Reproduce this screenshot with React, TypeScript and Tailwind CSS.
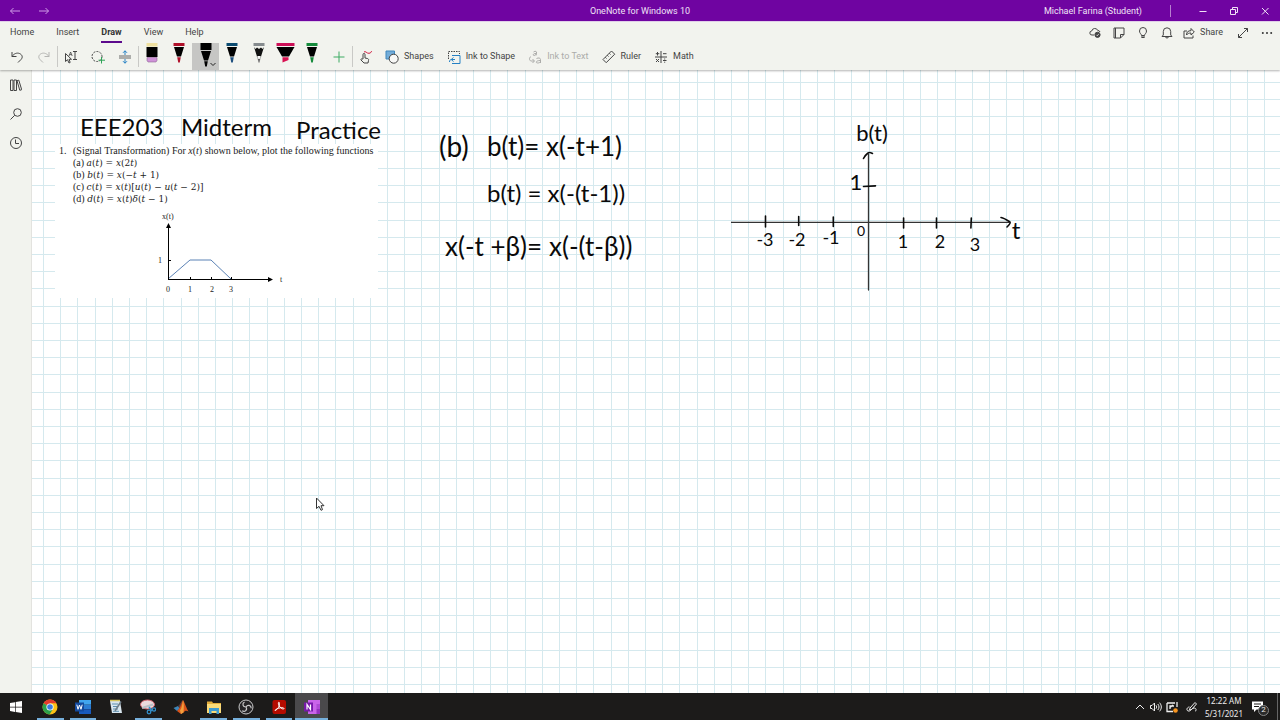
import type { ReactNode } from 'react';
import clsx from 'clsx';

type IconProps = { children: ReactNode; className?: string; box?: string };

const Icon = ({ children, className = 'size-4', box = '0 0 16 16' }: IconProps) => (
   <svg
      viewBox={box}
      className={clsx('shrink-0', className)}
      fill="none"
      stroke="currentColor"
      strokeWidth="1"
      aria-hidden="true"
   >
      {children}
   </svg>
);

const TitleBar = () => (
   <header className="grid h-[22px] shrink-0 grid-cols-[1fr_auto_1fr] items-center border-b border-[#e6d3ee] bg-[#6f04a1] text-[9px] text-[#f0e2f6]">
      <div className="flex text-[#cf9be6]">
         <button aria-label="Back" className="flex w-[29px] justify-center">
            <Icon className="size-3" box="0 0 12 12">
               <path d="M11 6H1.5M4.5 3l-3 3 3 3" />
            </Icon>
         </button>
         <button aria-label="Forward" className="flex w-[29px] justify-center">
            <Icon className="size-3" box="0 0 12 12">
               <path d="M1 6h9.500M7.500 3l3 3-3 3" />
            </Icon>
         </button>
      </div>
      <h1 className="pt-0.5">OneNote for Windows 10</h1>
      <div className="flex items-center justify-end">
         <span className="pt-0.5">Michael Farina (Student)</span>
         <span className="ml-7 h-3 w-px bg-[#b77fd0]" />
         <div className="ml-4 flex">
            <button aria-label="Minimize" className="flex w-[31px] justify-center">
               <Icon className="size-3" box="0 0 12 12">
                  <path d="M2.500 6.500h7" />
               </Icon>
            </button>
            <button aria-label="Restore" className="flex w-[31px] justify-center">
               <Icon className="size-3" box="0 0 12 12">
                  <path d="M2.500 4.500h5v5h-5zM4.500 4.500v-2h5v5h-2" />
               </Icon>
            </button>
            <button aria-label="Close" className="flex w-[31px] justify-center">
               <Icon className="size-3" box="0 0 12 12">
                  <path d="m3 3 6.500 6.500M9.500 3 3 9.500" />
               </Icon>
            </button>
         </div>
      </div>
   </header>
);

const tabs = ['Home', 'Insert', 'Draw', 'View', 'Help'];

const Tabs = () => (
   <div className="flex h-[21px] items-stretch justify-between">
      <nav className="flex gap-[22px] pl-[10px]">
         {tabs.map((tab) => (
            <button
               key={tab}
               className={clsx(
                  'border-b-2 pt-0.5 text-[9px]',
                  tab === 'Draw'
                     ? 'border-[#5c0a8c] font-bold text-[#333]'
                     : 'border-transparent'
               )}
            >
               {tab}
            </button>
         ))}
      </nav>
      <div className="flex items-center pr-px text-[9px]">
         <button aria-label="Sync status" className="flex w-6 justify-center">
            <Icon className="size-3" box="0 0 12 12">
               <path d="M5 8H3a2 2 0 0 1-.3-4A3.200 3.200 0 0 1 8.800 3.500 2.200 2.200 0 0 1 11 5" />
               <circle cx="8.500" cy="7.800" r="2.600" fill="#444" />
               <path d="m7.300 7.800 1 1 1.600-2" stroke="#fff" strokeWidth=".7" />
            </Icon>
         </button>
         <button aria-label="Feed" className="flex w-6 justify-center">
            <Icon className="size-3" box="0 0 12 12">
               <path d="M1 1h10v6.500L7.500 11H1zM7.500 11V7.500H11M2.500 1v10" />
            </Icon>
         </button>
         <button aria-label="Tell me" className="flex w-6 justify-center">
            <Icon className="size-3" box="0 0 12 12">
               <path d="M4.500 8.500C4.500 7 2.500 6.500 2.500 4a3.500 3.500 0 0 1 7 0c0 2.500-2 3-2 4.500zM4.500 10.500h3M5 8.500v2M7 8.500v2" />
            </Icon>
         </button>
         <button aria-label="Notifications" className="flex w-6 justify-center">
            <Icon className="size-3" box="0 0 12 12">
               <path d="M1 9.500h10L9.700 8V4.500a3.700 3.700 0 0 0-7.400 0V8zM4.500 9.500a1.500 1.500 0 0 0 3 0" />
            </Icon>
         </button>
         <button className="ml-1 flex items-center gap-[5px]">
            <Icon className="size-3" box="0 0 12 12">
               <path d="M4 4H1v7h9V8.500M3.500 8C3.500 5 5 3.700 8 3.700V1.500L11.300 5 8 8V6C6 6 4.500 6.500 3.500 8z" />
            </Icon>
            Share
         </button>
         <button aria-label="Full screen" className="ml-2 flex w-6 justify-center">
            <Icon className="size-3" box="0 0 12 12">
               <path d="M1.500 10.500l9-9M7 1.500h3.500V5M1.500 7v3.500H5" />
            </Icon>
         </button>
         <button aria-label="More" className="flex w-6 justify-center">
            <Icon className="size-3" box="0 0 12 12">
               <g fill="#333" stroke="none">
                  <circle cx="1.800" cy="6" r="1" />
                  <circle cx="6" cy="6" r="1" />
                  <circle cx="10.200" cy="6" r="1" />
               </g>
            </Icon>
         </button>
      </div>
   </div>
);

type PenProps = { cap: string; tip: string };

const Pen = ({ cap, tip }: PenProps) => (
   <Icon className="h-5 w-3" box="0 0 12 20">
      <g stroke="none">
         <path d="M.500 0h11v3H.500z" fill={cap} />
         <path d="M1 4h10L8 13.500H4z" fill="#000" />
         <path d="M4.200 14.300h3.600l-1 5.200H5.200z" fill={tip} />
      </g>
   </Icon>
);

const Pens = () => (
   <div className="grid w-[213px] grid-cols-8">
      <button aria-label="Eraser" className="flex justify-center">
         <Icon className="h-5 w-3" box="0 0 12 20">
            <path d="M.500 0h11v3.500H.500z" fill="#efe0a0" stroke="none" />
            <path d="M.500 4h11v10H.500z" fill="#000" stroke="none" />
            <path d="M1 14.500h10v3L10 19H2l-1-1.500z" fill="#cf92d8" stroke="#8f6a96" strokeWidth=".6" />
         </Icon>
      </button>
      <button aria-label="Red pen" className="flex justify-center">
         <Pen cap="#b0102a" tip="#b0102a" />
      </button>
      <button aria-label="Black pen" className="relative flex justify-center bg-[#c6c6c4]">
         <Icon className="h-[26px] w-3" box="0 0 12 26">
            <g stroke="none" fill="#000">
               <path d="M.500 0h11v7H.500z" />
               <path d="M1 8h10L8 17.500H4zM4.200 18.300h3.600l-1 5.200H5.200z" />
            </g>
         </Icon>
         <Icon className="absolute right-0.5 bottom-0.5 size-2" box="0 0 8 8">
            <path d="m1.500 3 2.500 2.500L6.500 3" stroke="#222" />
         </Icon>
      </button>
      <button aria-label="Blue pen" className="flex justify-center">
         <Pen cap="#0b4a70" tip="#1d4f7e" />
      </button>
      <button aria-label="Pencil" className="flex justify-center">
         <Icon className="h-5 w-3" box="0 0 12 20">
            <g stroke="none">
               <path d="M.500 0h11v3H.500z" fill="#868b8e" />
               <path d="M1 4l1.500 2L4 4.500 6 6l2-1.500L9.500 6 11 4 8 13.500H4z" fill="#111" />
               <path d="M4.200 13h3.600L6 19.500z" fill="#fff" />
               <path d="M5 16h2l-1 3.500z" fill="#333" />
            </g>
            <path d="M4.200 13 6 19.500 7.800 13" stroke="#777" strokeWidth=".6" />
         </Icon>
      </button>
      <button aria-label="Pink highlighter" className="flex justify-center">
         <Icon className="h-5 w-[19px]" box="0 0 19 20">
            <g stroke="none">
               <path d="M.500 0h18v3H.500z" fill="#cc0f57" />
               <path d="M.500 4h18L13 13.500H6z" fill="#000" />
               <path d="M6.500 14.300h6V17l-6 2.500z" fill="#d81051" />
            </g>
         </Icon>
      </button>
      <button aria-label="Green pen" className="flex justify-center">
         <Pen cap="#158a3b" tip="#158a3b" />
      </button>
      <button aria-label="Add pen" className="flex items-center justify-center text-[#3cab62]">
         <Icon className="size-3" box="0 0 12 12">
            <path d="M6 .500v11M.500 6h11" />
         </Icon>
      </button>
   </div>
);

const Separator = () => <span className="mt-[3px] h-[21px] w-px bg-[#c9c9c6]" />;

const Tools = () => (
   <div className="flex h-[27px] items-stretch pl-1">
      <div className="grid w-[53px] grid-cols-2 place-items-center">
         <button aria-label="Undo">
            <Icon className="size-3" box="0 0 12 12">
               <path d="M1 1v4.500h4.500M1 5.500C3 2.500 6 1.500 8.500 2.500c3 1.300 3.500 4 1.500 6L7 11.500" />
            </Icon>
         </button>
         <button aria-label="Redo" className="text-[#b5b5b3]">
            <Icon className="size-3" box="0 0 12 12">
               <path d="M11 1v4.500H6.500M11 5.500C9 2.500 6 1.500 3.500 2.500c-3 1.300-3.500 4-1.500 6L5 11.500" />
            </Icon>
         </button>
      </div>
      <Separator />
      <div className="grid w-20 grid-cols-3 place-items-center">
         <button aria-label="Select objects or type text">
            <Icon className="size-3.5" box="0 0 14 14">
               <path d="M1.500 3.500v8l2-1.800 1.500 3.300 1.200-.6L5 9.300h2.500z" />
               <path d="M9 1.500h4M11 1.500v8M9 9.500h4" />
               <path d="m5 6 1.600-4L8.200 6M5.600 4.600h2" strokeWidth=".8" />
            </Icon>
         </button>
         <button aria-label="Lasso select">
            <Icon className="size-3.5" box="0 0 14 14">
               <circle cx="6" cy="6.500" r="5" strokeDasharray="2 1.200" />
               <path d="M10.500 7v6.500M7.500 10.200H14" stroke="#2fa457" />
            </Icon>
         </button>
         <button aria-label="Insert space">
            <Icon className="size-3.5" box="0 0 14 14">
               <path d="M1 6h12M1 8h12" strokeWidth=".8" />
               <path d="M7 5V.800M5 2.800l2-2 2 2M7 9v4.200M5 11.200l2 2 2-2" stroke="#2581c4" />
            </Icon>
         </button>
      </div>
      <Separator />
      <Pens />
      <Separator />
      <button aria-label="Draw with touch" className="flex w-[26px] items-center justify-center">
         <Icon className="size-3.5" box="0 0 14 14">
            <path d="M4 9V4.500a1 1 0 0 1 2 0V8l2.500.5c1 .3 1.300 1 1 2L9 13H5L2 10c-.3-1 .7-1.600 1.300-1z" />
            <path d="M5 2c1.500-1.500 2.500 1.500 5 1.300 1.500-.3 2.500-1 2.500-2.300" stroke="#d21f43" />
         </Icon>
      </button>
      <div className="ml-[6px] flex items-center gap-[13px] text-[9px]">
         <button className="flex items-center gap-[5px]">
            <Icon className="size-3.5" box="0 0 14 14">
               <path d="M1 1h8.500v8H1z" fill="#73acd8" stroke="#3e86bd" />
               <circle cx="8.700" cy="8.700" r="4.500" fill="#f8f8f6" />
            </Icon>
            Shapes
         </button>
         <button className="flex items-center gap-[5px]">
            <Icon className="size-3.5" box="0 0 14 14">
               <path d="M1.500 9V1.500h11V4" strokeDasharray="1.500 1" />
               <path d="M5 5.500h8v8H5" stroke="#2581c4" />
               <path d="M8 9.500H4.500c-1.500 0-2 1-2 2.500M6.500 7.500l-2.300 2 2.300 2" stroke="#2581c4" />
            </Icon>
            Ink to Shape
         </button>
         <button disabled className="flex items-center gap-[5px] text-[#acacaa]">
            <Icon className="size-3.5" box="0 0 14 14">
               <path d="M5.500 2c2-1.500 3.500-.5 3 1L8 5.500M8.200 3.500c-3-.5-3.700 2-2.200 2 1.200 0 1.800-.8 2-1.500" />
               <path d="M8.500 8.500c2-1 4-.5 4 1V13M12.500 10.500c-5 0-5 2.500-2.800 2.500 1.500 0 2.800-.8 2.800-1.500" />
               <path d="M3 6.500c-2 1-2 4 0 4.500h3M4.500 9 6.500 11l-2 2" />
            </Icon>
            Ink to Text
         </button>
         <button className="flex items-center gap-[5px]">
            <Icon className="size-3.5" box="0 0 14 14">
               <path d="m1 9.500 8.500-8.500 3.200 3.200-8.500 8.500zM3.300 7.300l1.200 1.200M5.300 5.300l1.200 1.200M7.300 3.300l1.200 1.200" />
            </Icon>
            Ruler
         </button>
         <button className="flex items-center gap-[5px]">
            <Icon className="size-3.5" box="0 0 14 14">
               <path d="M7 1v12M1 7h12M3.500 2v3.500M1.800 3.700h3.500M9 3.700h3.500M2 9l3 3M5 9l-3 3M9 10.500h3.500M10.700 8.500v1M10.700 11.700v1" />
            </Icon>
            Math
         </button>
      </div>
   </div>
);

const SideBar = () => (
   <aside className="flex w-8 shrink-0 flex-col items-center border-r border-[#e3e3df] bg-[#f2f3ee] text-[#444]">
      <button aria-label="Notebooks" className="flex h-[29px] items-center">
         <Icon className="size-3" box="0 0 12 12">
            <path d="M.500 1h2.500v10.500H.500zM4 1h2.500v10.500H4zM7 1.800l1.800-.6 2.900 9.500-1.900.6z" />
         </Icon>
      </button>
      <button aria-label="Search" className="flex h-[29px] items-center">
         <Icon className="size-3" box="0 0 12 12">
            <circle cx="7.500" cy="4.500" r="3.800" />
            <path d="M4.700 7.300.500 11.500" />
         </Icon>
      </button>
      <button aria-label="Recent notes" className="flex h-[29px] items-center">
         <Icon className="size-3" box="0 0 12 12">
            <circle cx="6" cy="6" r="5.500" />
            <path d="M5.500 2.500v4h3.500" />
         </Icon>
      </button>
   </aside>
);

// five rule lines per tile keep every line on a whole pixel
const ruleLines = [0, 17, 34, 52, 69];

const RuledPaper = () => (
   <svg className="absolute inset-0 size-full" aria-hidden="true">
      <pattern id="rules" x="11" y="12" width="86" height="86" patternUnits="userSpaceOnUse">
         {ruleLines.map((at) => (
            <g key={at} fill="#d5e9ee">
               <rect x={at} width="1" height="86" />
               <rect y={at} width="86" height="1" />
            </g>
         ))}
      </pattern>
      <rect width="100%" height="100%" fill="url(#rules)" />
   </svg>
);

const Formula = ({ children }: { children: ReactNode }) => (
   <span className="font-['DejaVu_Serif',serif] text-[9px]">{children}</span>
);

const Problem = () => (
   <section className="absolute top-[74px] left-[23px] h-[154px] w-[323px] bg-white font-['Liberation_Serif',serif] text-[10px] leading-[12px] text-[#222]">
      <ol className="list-none pt-px pl-[4px]">
         <li className="grid grid-cols-[14px_1fr]">
            <span>1.</span>
            <div className="whitespace-nowrap">
               <p>
                  (Signal Transformation) For <i>x</i>(<i>t</i>) shown below, plot the following functions
               </p>
               <p>
                  (a){' '}
                  <Formula>
                     <i>a</i>(<i>t</i>) = <i>x</i>(2<i>t</i>)
                  </Formula>
               </p>
               <p>
                  (b){' '}
                  <Formula>
                     <i>b</i>(<i>t</i>) = <i>x</i>(−<i>t</i> + 1)
                  </Formula>
               </p>
               <p>
                  (c){' '}
                  <Formula>
                     <i>c</i>(<i>t</i>) = <i>x</i>(<i>t</i>)[<i>u</i>(<i>t</i>) − <i>u</i>(<i>t</i> − 2)]
                  </Formula>
               </p>
               <p>
                  (d){' '}
                  <Formula>
                     <i>d</i>(<i>t</i>) = <i>x</i>(<i>t</i>)<i>δ</i>(<i>t</i> − 1)
                  </Formula>
               </p>
            </div>
         </li>
      </ol>
      <svg viewBox="0 0 140 90" className="mt-px ml-[95px] h-[90px] w-[140px]" fontSize="8" fill="#222">
         <text x="12" y="13">x(t)</text>
         <text x="8" y="57">1</text>
         <text x="130" y="76">t</text>
         <text x="16" y="86">0</text>
         <text x="38" y="86">1</text>
         <text x="60" y="86">2</text>
         <text x="79" y="86">3</text>
         <path d="m18 73 22-19h21l20 19" fill="none" stroke="#5b82b5" />
         <path d="M18.500 20v54M18 73.500h101M18 54.500h3M40.500 73v-2M61.500 73v-2M81.500 73v-2" fill="none" stroke="#000" />
         <path d="m18.500 17 2.500 5h-5zM123 73.500l-5 2.500v-5z" fill="#000" />
      </svg>
   </section>
);

const ink = [
   { text: 'EEE203', place: 'left-[48px] top-[43px] text-[24px]' },
   { text: 'Midterm', place: 'left-[149px] top-[43px] text-[24px]' },
   { text: 'Practice', place: 'left-[264px] top-[46px] text-[24px]' },
   { text: '(b)', place: 'left-[407px] top-[62px] text-[28px]' },
   { text: 'b(t)= x(-t+1)', place: 'left-[455px] top-[62px] text-[26px]' },
   { text: 'b(t) = x(-(t-1))', place: 'left-[455px] top-[109px] text-[24px]' },
   { text: 'x(-t +β)=', place: 'left-[413px] top-[162px] text-[26px]' },
   { text: 'x(-(t-β))', place: 'left-[517px] top-[162px] text-[26px]' },
];

const InkNotes = () => (
   <>
      {ink.map(({ text, place }) => (
         <p
            key={text}
            className={clsx("absolute font-['Lato',sans-serif] leading-[28px] whitespace-nowrap text-[#0a0a0a]", place)}
         >
            {text}
         </p>
      ))}
   </>
);

const axisLabels = [
   { x: 734, y: 246, label: '-3' },
   { x: 766, y: 246, label: '-2' },
   { x: 800, y: 244, label: '-1' },
   { x: 872, y: 248, label: '1' },
   { x: 909, y: 248, label: '2' },
   { x: 944, y: 251, label: '3' },
];

const InkAxes = () => (
   <svg
      viewBox="700 115 300 180"
      className="absolute top-[45px] left-[699px] h-[180px] w-[300px] font-['Lato',sans-serif]"
      fill="#0a0a0a"
      fontSize="18"
      textAnchor="middle"
   >
      <g fill="none" stroke="#0a0a0a" strokeWidth="1.600" strokeLinecap="round">
         <path d="M700 222.300h278M837.500 154v136" stroke="#333" strokeWidth="1.300" />
         <path d="M832.500 158.500c1-2 2.500-4 4.500-5.500 1-.8 2.500-.5 4.500.5M832.500 186.500l12-.6" />
         <path d="M734.500 216v11M767.700 216.500v9M802.300 217v9.500M872.600 218v10M905.500 218v10M940.300 218l-.4 10" />
         <path d="M970 217.500c3 .5 6 2.500 9 4.500 1 1-1 3-3 5" />
      </g>
      <text x="841" y="141" fontSize="22">b(t)</text>
      <text x="825" y="190" fontSize="22">1</text>
      <text x="830" y="236" fontSize="14">0</text>
      <text x="985" y="239" fontSize="24">t</text>
      {axisLabels.map(({ x, y, label }) => (
         <text key={label} x={x} y={y}>
            {label}
         </text>
      ))}
   </svg>
);

const Page = () => (
   <main className="relative min-w-0 flex-1 overflow-hidden bg-white">
      <RuledPaper />
      <Problem />
      <InkNotes />
      <InkAxes />
      <Icon className="absolute top-[427px] left-[283px] h-4 w-3" box="0 0 12 16">
         <path d="M1.500 1v10.500L4 9.300l2 4 1.500-.7L6 8.700h3z" fill="#fff" stroke="#333" />
      </Icon>
   </main>
);

const apps = [
   {
      name: 'Chrome',
      open: true,
      art: (
         <>
            <circle cx="8" cy="8" r="7.500" fill="#fbc116" />
            <path d="M8 8 1.500 4.300A7.500 7.500 0 0 1 14.500 4.300H8z" fill="#e33b2e" />
            <path d="M8 8 1.500 4.300A7.500 7.500 0 0 0 7.500 15.500L11 10z" fill="#2ca14c" />
            <circle cx="8" cy="8" r="3.600" fill="#fff" />
            <circle cx="8" cy="8" r="2.800" fill="#3b7de0" />
         </>
      ),
   },
   {
      name: 'Word',
      open: true,
      art: (
         <>
            <path d="M4 1h12v4.700H4z" fill="#41a5ee" />
            <path d="M4 5.700h12v4.600H4z" fill="#2b7cd3" />
            <path d="M4 10.300h12V15H4z" fill="#185abd" />
            <path d="M0 3.500h9v9H0z" fill="#134a9e" />
            <path d="m1.800 5.700 1.200 4.600 1.500-4.300L6 10.300l1.200-4.600" fill="none" stroke="#fff" />
         </>
      ),
   },
   {
      name: 'Notepad',
      open: false,
      art: (
         <>
            <path d="M2 2h10l2 12H4z" fill="#d9e6ee" />
            <path d="M4 5h6M5 7.500h5M5 10h5M5 12.300h6" stroke="#5d8fae" />
            <path d="M2 1.500h10" stroke="#d5c35b" strokeWidth="1.500" />
            <path d="m7 12 6-9.500" stroke="#6f7e88" strokeWidth="1.500" />
         </>
      ),
   },
   {
      name: 'Snipping Tool',
      open: true,
      art: (
         <>
            <ellipse cx="7.500" cy="5.500" rx="7" ry="4.500" fill="#ead9dc" stroke="#d5606c" />
            <path d="m2 9 11-3.500" stroke="#b9bfc5" strokeWidth="2" />
            <path d="m9 8 3 4" stroke="#338fca" strokeWidth="1.500" />
            <circle cx="9" cy="13" r="1.800" fill="none" stroke="#338fca" strokeWidth="1.300" />
            <circle cx="14" cy="10.500" r="1.600" fill="none" stroke="#338fca" strokeWidth="1.300" />
         </>
      ),
   },
   {
      name: 'MATLAB',
      open: false,
      art: (
         <>
            <path d="M.500 9 5 7l2 2.500-3 2.500z" fill="#3f86b8" />
            <path d="M5 7c2-1 3-5 5-6L7 10z" fill="#5b3a3a" />
            <path d="M10 1c1.500 2 3.500 8.500 5.500 11.500-2-1-3.500-1-5 1L8 15 4 12c3-2 4.500-8 6-11z" fill="#d95319" />
            <path d="M10 1c1 3 1 8 .5 12.500L8 15 7 11.500C9 9 9.500 4 10 1z" fill="#f2a03d" />
         </>
      ),
   },
   {
      name: 'File Explorer',
      open: true,
      art: (
         <>
            <path d="M1 2.500h5l1 1.500h8v10H1z" fill="#e2ac3a" />
            <path d="M1 5h14v9H1z" fill="#fbdb78" />
            <path d="M3 9h10v6h-2.500v-3h-5v3H3z" fill="#3f9bd0" />
         </>
      ),
   },
   {
      name: 'OBS Studio',
      open: true,
      art: (
         <>
            <circle cx="8" cy="8" r="7" fill="#252426" stroke="#c8c8c8" />
            <path
               d="M8 8c-3.500 0-4-3.500-1.500-5M8 8c1.800 3-1.200 5.300-3.800 3.800M8 8c1.700-3 5.200-1.700 5.200 1.300"
               fill="none"
               stroke="#c8c8c8"
               strokeWidth="1.200"
            />
         </>
      ),
   },
   {
      name: 'Acrobat Reader',
      open: true,
      art: (
         <>
            <rect x="1.500" y="1" width="13.500" height="14" rx="2" fill="#b30b00" />
            <path
               d="M4 11.500c3-1 5-5 4.300-8-.8-1-1.500.5-.3 3 1.200 2.300 3 3.700 4.700 3.500 1-.8-.5-1.500-3.200-1.200-2.500.3-5 1.500-5.500 2.700z"
               fill="none"
               stroke="#fff"
            />
         </>
      ),
   },
   {
      name: 'OneNote',
      open: true,
      art: (
         <>
            <path d="M4 1h12v14H4z" fill="#ca64ea" />
            <path d="M12.500 5H16v5h-3.500z" fill="#ae4bd5" />
            <path d="M12.500 10H16v5h-3.500z" fill="#9332bf" />
            <path d="M0 3.500h9v9H0z" fill="#7719aa" />
            <path d="M3 10.500v-5l3.500 5v-5" fill="none" stroke="#fff" strokeWidth="1.200" />
         </>
      ),
   },
];

const TaskBar = () => (
   <footer className="flex h-[27px] shrink-0 justify-between bg-[#1c1b1a] text-[#eee]">
      <div className="flex">
         <button aria-label="Start" className="flex w-[34px] items-center justify-center pr-0.5">
            <Icon className="size-3" box="0 0 12 12">
               <path
                  d="M0 2l5-.8v4.500H0zM5.700 1.100 12 0v5.700H5.700zM0 6.400h5v4.500L0 10.100zM5.700 6.400H12V12l-6.300-1z"
                  fill="#fff"
                  stroke="none"
               />
            </Icon>
         </button>
         <div className="grid w-[294px] grid-cols-9">
            {apps.map(({ name, open, art }) => (
               <button
                  key={name}
                  aria-label={name}
                  className={clsx(
                     'relative flex items-center justify-center',
                     name === 'OneNote' && 'bg-[#4a494b]'
                  )}
               >
                  <Icon>
                     <g stroke="none">{art}</g>
                  </Icon>
                  {open && (
                     <span
                        className={clsx(
                           'absolute bottom-0 h-0.5 bg-[#76b0dc]',
                           name === 'OneNote' ? 'inset-x-0' : 'inset-x-[3px]'
                        )}
                     />
                  )}
               </button>
            ))}
         </div>
      </div>
      <div className="flex items-center">
         <button aria-label="Show hidden icons" className="flex w-4 justify-center">
            <Icon className="size-3" box="0 0 12 12">
               <path d="m2 8 4-4 4 4" />
            </Icon>
         </button>
         <button aria-label="Volume" className="flex w-4 justify-center">
            <Icon className="size-3" box="0 0 12 12">
               <path d="M.500 4.500H2L4.500 2v8L2 7.500H.500zM6 4.300c.8 1 .8 2.400 0 3.400M7.800 3c1.600 2 1.600 4 0 6M9.600 1.700c2.300 2.800 2.300 5.800 0 8.600" />
            </Icon>
         </button>
         <button aria-label="Updates" className="flex w-4 justify-center">
            <Icon className="size-3" box="0 0 12 12">
               <path d="M1 2h8M11 1v5M1 2v8.500h6M4 8V5h4M4 6.500l3-2.500" strokeWidth="1.300" />
               <circle cx="9.500" cy="9.500" r="2.300" fill="#f7941e" stroke="none" />
            </Icon>
         </button>
         <button aria-label="Windows Ink" className="ml-1 flex w-4 justify-center">
            <Icon className="size-3" box="0 0 12 12">
               <path d="M4 7 9 1.500l1.500 1.500L5.500 8.500 3.500 9zM3.500 6C1 6 0 9 2 10s4-3 6-3 3 2 1 3.500" />
            </Icon>
         </button>
         <time className="w-[48px] text-center font-['Noto_Sans',sans-serif] text-[8px] leading-[13px] whitespace-nowrap">
            12:22 AM
            <br />
            5/31/2021
         </time>
         <button aria-label="2 notifications" className="relative flex w-[18px] justify-center">
            <Icon className="size-3.5" box="0 0 14 14">
               <path d="M2 1.500h11v8H6.500L4 12V9.500H2z" fill="#fff" stroke="none" />
               <path d="M4 4h7M4 6.500h5" stroke="#1c1b1a" />
            </Icon>
            <span className="absolute top-[5px] left-[10px] flex size-[11px] items-center justify-center rounded-full border border-[#888] bg-[#2a2a2a] text-[8px] leading-none">
               2
            </span>
         </button>
         <span className="ml-[11px] h-full w-[3px] border-l border-[#666]" />
      </div>
   </footer>
);

export default function App() {
   return (
      <div className="flex h-screen flex-col overflow-hidden font-['Roboto','Open_Sans',sans-serif]">
         <TitleBar />
         <div className="z-10 shrink-0 bg-[#f2f3ee] text-[#444] shadow-[0_1px_2px_rgba(0,0,0,0.3)]">
            <Tabs />
            <Tools />
         </div>
         <div className="flex min-h-0 flex-1">
            <SideBar />
            <Page />
         </div>
         <TaskBar />
      </div>
   );
}
